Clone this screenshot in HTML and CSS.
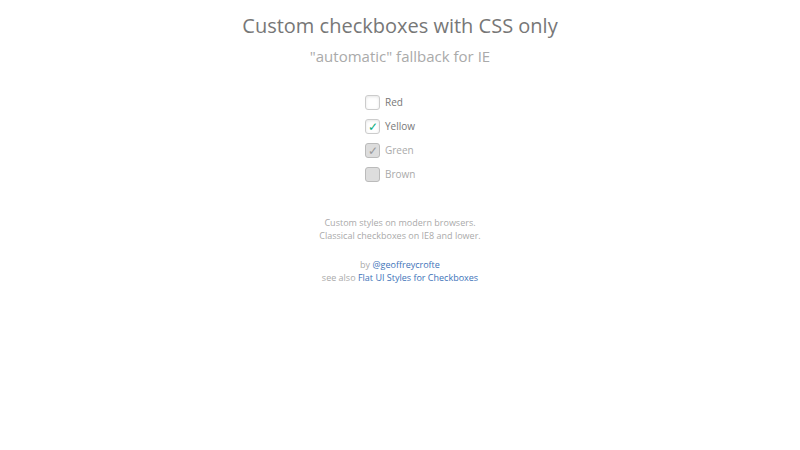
FILE: index.html
```html
<!DOCTYPE html>
<html lang="en">
<head>
  <meta charset="UTF-8" />
  <meta name="viewport" content="width=device-width, initial-scale=1.0"/>
  <title>Custom checkboxes with CSS only</title>
  <link rel="stylesheet" href="styles.css">
</head>
<body>
  <h1>Custom checkboxes with CSS only</h1>
  <h2>"automatic" fallback for IE</h2>

  <form class="choices">
    <p>
      <input type="checkbox" id="test1" />
      <label for="test1">Red</label>
    </p>
    <p>
      <input type="checkbox" id="test2" checked="checked" />
      <label for="test2">Yellow</label>
    </p>
    <p>
      <input type="checkbox" id="test3" checked="checked" disabled="disabled" />
      <label for="test3">Green</label>
    </p>
    <p>
      <input type="checkbox" id="test4" disabled="disabled" />
      <label for="test4">Brown</label>
    </p>
  </form>

  <p class="txt">Custom styles on modern browsers.<br>Classical checkboxes on IE8 and lower.</p>
  <p class="txt credits">by <a href="#">@geoffreycrofte</a><br>see also <a href="#">Flat UI Styles for Checkboxes</a></p>
</body>
</html>
```

FILE: styles.css
```css
body {
  margin: 0;
  padding: 0;
  background: white;
  font-family: 'Open Sans', sans-serif;
  color: #777;
  text-align: center;
}

h1 {
  margin: 0;
  padding-top: 10px;
  font-size: 20px;
  font-weight: 400;
  line-height: 32px;
  color: #777;
}

h2 {
  margin: 0;
  font-size: 15px;
  font-weight: 400;
  line-height: 28px;
  color: #aaa;
}

.choices {
  width: 70px;
  margin: 20px auto 0;
  text-align: left;
}

.choices p {
  margin: 0;
  height: 24px;
  display: flex;
  align-items: center;
}

/* hide the native box, draw our own */
[type="checkbox"]:not(:checked),
[type="checkbox"]:checked {
  position: absolute;
  left: -9999px;
}

[type="checkbox"] + label {
  position: relative;
  padding-left: 20px;
  font-size: 10px;
  line-height: 15px;
  color: #777;
  cursor: pointer;
}

[type="checkbox"] + label:before {
  content: '';
  position: absolute;
  left: 0;
  top: 0;
  width: 13px;
  height: 13px;
  border: 1px solid #ccc;
  background: #fff;
  border-radius: 3px;
  box-shadow: inset 0 1px 3px rgba(0,0,0,.1);
}

[type="checkbox"] + label:after {
  content: '✓';
  position: absolute;
  top: 0;
  left: 3px;
  font-size: 12px;
  line-height: 15px;
  color: #09ad7e;
  transition: all .2s;
}

[type="checkbox"]:not(:checked) + label:after {
  opacity: 0;
  transform: scale(0);
}

[type="checkbox"]:disabled + label:before {
  border-color: #bbb;
  background: #ddd;
  box-shadow: none;
}

[type="checkbox"]:disabled:checked + label:after {
  color: #999;
}

[type="checkbox"]:disabled + label {
  color: #aaa;
}

.txt {
  margin: 30px 0 0;
  font-size: 9px;
  line-height: 13px;
  color: #aaa;
}

.credits {
  margin-top: 16px;
  line-height: 13px;
}

.txt a {
  color: #3d73b9;
  text-decoration: none;
}
```
